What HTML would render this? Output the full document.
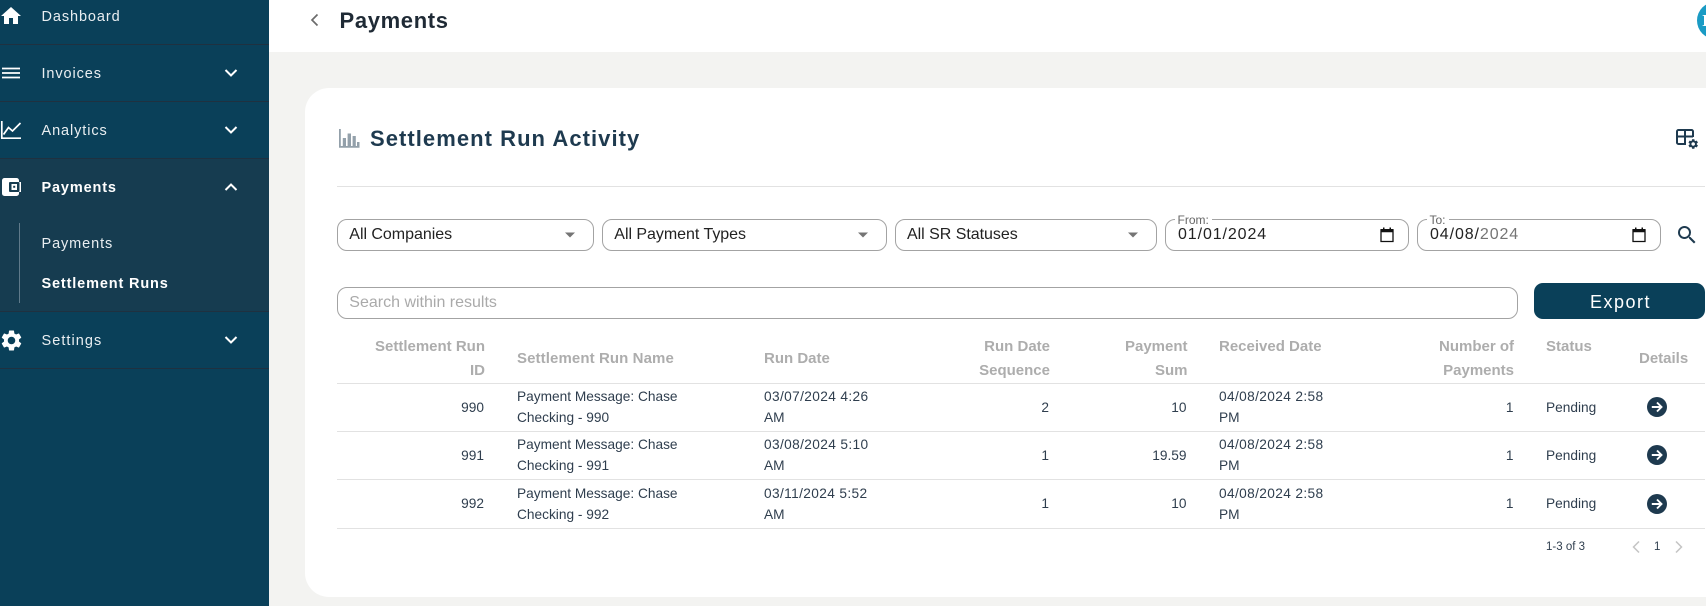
<!DOCTYPE html>
<html>
<head>
<meta charset="utf-8">
<style>
html,body{margin:0;padding:0}
body{width:1706px;height:606px;overflow:hidden;position:relative;background:#f3f3f1;font-family:"Liberation Sans",sans-serif}
.t{position:absolute;white-space:nowrap;line-height:20px}
.a{position:absolute}
.nav{color:#e9eef1;font-size:14.5px;letter-spacing:.9px;left:41.5px}
.navb{color:#fff;font-size:14.5px;font-weight:bold;letter-spacing:.85px;left:41.5px}
.div{position:absolute;left:0;width:269px;height:1px;background:#1f3140}
.box{position:absolute;box-sizing:border-box;border:1px solid #a3a3a3;border-radius:10px;background:#fff;height:32px}
.sel{color:#222;font-size:16px;letter-spacing:-.03px}
.lab{font-size:12px;color:#666;background:#fff;padding:0 3px;line-height:12px}
.date{color:#222;font-size:16px;letter-spacing:.9px}
.th{color:#adadad;font-size:15px;font-weight:bold}
.td{color:#2f3e4e;font-size:13.7px}
.dt{letter-spacing:.37px}
.line{position:absolute;left:337px;width:1368px;height:1px;background:#e2e2e2}
</style>
</head>
<body>
<!-- header -->
<div class="a" style="left:0;top:0;width:1706px;height:52px;background:#fff"></div>
<svg class="a" style="left:308px;top:11px" width="14" height="18" viewBox="0 0 14 18"><path d="M9.5 3.5 L4 9 L9.5 14.5" fill="none" stroke="#6b6b6b" stroke-width="1.7"/></svg>
<div class="t" style="left:339.5px;top:10.500px;font-size:22px;font-weight:bold;letter-spacing:.65px;color:#1f2a35">Payments</div>
<div class="a" style="left:1697px;top:2px;width:37px;height:37px;border-radius:50%;background:#1a9bc4"></div>
<div class="t" style="left:1702px;top:11px;font-size:17px;font-weight:bold;color:#fff;font-family:'Liberation Serif',serif">I</div>

<!-- sidebar -->
<div class="a" style="left:0;top:0;width:269px;height:606px;background:#0a4059"></div>
<div class="a" style="left:0;top:159px;width:269px;height:153px;background:#163c50"></div>
<div class="div" style="top:44px"></div>
<div class="div" style="top:101px"></div>
<div class="div" style="top:158px"></div>
<div class="div" style="top:311px"></div>
<div class="div" style="top:368px"></div>

<svg class="a" style="left:-1px;top:4px" width="24" height="24" viewBox="0 0 24 24"><path fill="#fff" d="M10 20v-6h4v6h5v-8h3L12 3 2 12h3v8z"/></svg>
<div class="t nav" style="top:7px">Dashboard</div>

<svg class="a" style="left:0;top:64px" width="24" height="18" viewBox="0 0 24 18"><path fill="#fff" d="M2 3.6h18v1.800H2zM2 8.100h18v1.800H2zM2 12.600h18v1.800H2z"/></svg>
<div class="t nav" style="top:64px">Invoices</div>
<svg class="a" style="left:223px;top:67px" width="16" height="12" viewBox="0 0 16 12"><path d="M2.5 3 L8 8.500 L13.500 3" fill="none" stroke="#fff" stroke-width="2"/></svg>

<svg class="a" style="left:0;top:120px" width="22" height="20" viewBox="0 0 22 20"><path d="M1.800 1V18.200H21" fill="none" stroke="#fff" stroke-width="1.700"/><path d="M3.500 14.500 L8.500 7.500 L12.500 11 L20.500 3" fill="none" stroke="#fff" stroke-width="1.700"/></svg>
<div class="t nav" style="top:121px">Analytics</div>
<svg class="a" style="left:223px;top:124px" width="16" height="12" viewBox="0 0 16 12"><path d="M2.500 3 L8 8.500 L13.500 3" fill="none" stroke="#fff" stroke-width="2"/></svg>

<svg class="a" style="left:0;top:176px" width="24" height="22" viewBox="0 0 24 22"><rect x="2" y="2" width="17" height="18" rx="2.500" fill="#fff"/><rect x="9" y="6" width="12" height="10" fill="#fff"/><rect x="9" y="6" width="10.500" height="10" rx="1" fill="#163c50"/><rect x="11.500" y="8" width="5.500" height="6" fill="#fff"/><rect x="13.200" y="9.800" width="2" height="2" fill="#163c50"/><rect x="19.500" y="6" width="1.500" height="10" fill="#fff"/></svg>
<div class="t navb" style="top:178px">Payments</div>
<svg class="a" style="left:223px;top:181px" width="16" height="12" viewBox="0 0 16 12"><path d="M2.500 9 L8 3.500 L13.500 9" fill="none" stroke="#fff" stroke-width="2"/></svg>

<div class="a" style="left:19px;top:223px;width:1px;height:80px;background:#5f7a8a"></div>
<div class="t nav" style="top:234px">Payments</div>
<div class="t navb" style="top:274px">Settlement Runs</div>

<svg class="a" style="left:-1.500px;top:327.500px" width="25" height="25" viewBox="0 0 24 24"><path fill="#fff" d="M19.140 12.940c.04-.3.06-.61.06-.94 0-.32-.02-.64-.07-.94l2.030-1.580c.18-.14.23-.41.12-.61l-1.920-3.320c-.12-.22-.37-.29-.59-.22l-2.390.96c-.5-.38-1.030-.7-1.620-.94l-.36-2.540c-.04-.24-.24-.41-.48-.41h-3.840c-.24 0-.43.17-.47.41l-.36 2.540c-.59.24-1.130.57-1.620.94l-2.390-.96c-.22-.08-.47 0-.59.22L2.740 8.870c-.12.21-.08.47.12.61l2.030 1.580c-.05.3-.09.63-.09.94s.02.64.07.94l-2.030 1.580c-.18.14-.23.41-.12.61l1.920 3.320c.12.22.37.29.59.22l2.390-.96c.5.38 1.030.7 1.620.94l.36 2.540c.05.24.24.41.48.41h3.840c.24 0 .44-.17.47-.41l.36-2.540c.59-.24 1.130-.56 1.620-.94l2.390.96c.22.08.47 0 .59-.22l1.920-3.320c.12-.22.07-.47-.12-.61l-2.010-1.580zM12 15.600c-1.980 0-3.600-1.620-3.600-3.600s1.620-3.600 3.600-3.600 3.600 1.620 3.600 3.600-1.620 3.600-3.600 3.600z"/></svg>
<div class="t nav" style="top:331px;letter-spacing:1.050px">Settings</div>
<svg class="a" style="left:223px;top:334px" width="16" height="12" viewBox="0 0 16 12"><path d="M2.500 3 L8 8.500 L13.500 3" fill="none" stroke="#fff" stroke-width="2"/></svg>

<!-- card -->
<div class="a" style="left:305px;top:88px;width:1440px;height:509px;background:#fff;border-radius:24px"></div>

<svg class="a" style="left:339px;top:129px" width="21" height="19" viewBox="0 0 21 19"><path fill="#93a0aa" d="M0 0h1.800v17h18.700v1.700H0zM3.800 9h3.200v8H3.800zM8.600 4.500h3.400V17H8.600zM13.600 7h3.200v10h-3.200zM18 13h2.500v4H18z"/></svg>
<div class="t" style="left:370px;top:129px;font-size:22px;font-weight:bold;letter-spacing:1.050px;color:#1e3a4f">Settlement Run Activity</div>
<svg class="a" style="left:1676px;top:129px" width="24" height="21" viewBox="0 0 24 21"><path fill="none" stroke="#1e3a4f" stroke-width="2" d="M1 14V2.500A1.500 1.500 0 0 1 2.500 1h13A1.500 1.500 0 0 1 17 2.500V8M1 7.500H17M9 1V15M1 13.500A1.500 1.500 0 0 0 2.500 15H10"/><g transform="translate(11.200 9) scale(.5)"><path fill="#1e3a4f" d="M19.140 12.940c.04-.3.06-.61.06-.94 0-.32-.02-.64-.07-.94l2.030-1.580c.18-.14.23-.41.12-.61l-1.920-3.320c-.12-.22-.37-.29-.59-.22l-2.390.96c-.5-.38-1.030-.7-1.620-.94l-.36-2.540c-.04-.24-.24-.41-.48-.41h-3.840c-.24 0-.43.17-.47.41l-.36 2.540c-.59.24-1.130.57-1.620.94l-2.390-.96c-.22-.08-.47 0-.59.22L2.740 8.870c-.12.21-.08.47.12.61l2.030 1.580c-.05.3-.09.63-.09.94s.02.64.07.94l-2.030 1.580c-.18.14-.23.41-.12.61l1.920 3.320c.12.22.37.29.59.22l2.390-.96c.5.38 1.030.7 1.620.94l.36 2.540c.05.24.24.41.48.41h3.840c.24 0 .44-.17.47-.41l.36-2.540c.59-.24 1.130-.56 1.620-.94l2.390.96c.22.08.47 0 .59-.22l1.920-3.320c.12-.22.07-.47-.12-.61l-2.010-1.580zM12 15.600c-1.980 0-3.600-1.620-3.600-3.600s1.620-3.600 3.600-3.600 3.600 1.620 3.600 3.600-1.620 3.600-3.600 3.600z"/></g></svg>
<div class="a" style="left:337px;top:186px;width:1368px;height:1px;background:#e2e2e2"></div>

<!-- filters -->
<div class="box" style="left:337px;top:219px;width:257px"></div>
<div class="t sel" style="left:349.300px;top:225px">All Companies</div>
<svg class="a" style="left:563px;top:232px" width="14" height="7" viewBox="0 0 14 7"><path d="M2 0.500h10L7 5.500z" fill="#757575"/></svg>

<div class="box" style="left:602px;top:219px;width:285px"></div>
<div class="t sel" style="left:614.300px;top:225px">All Payment Types</div>
<svg class="a" style="left:856px;top:232px" width="14" height="7" viewBox="0 0 14 7"><path d="M2 0.500h10L7 5.500z" fill="#757575"/></svg>

<div class="box" style="left:895px;top:219px;width:262px"></div>
<div class="t sel" style="left:907px;top:225px">All SR Statuses</div>
<svg class="a" style="left:1126px;top:232px" width="14" height="7" viewBox="0 0 14 7"><path d="M2 0.500h10L7 5.500z" fill="#757575"/></svg>

<div class="box" style="left:1165px;top:219px;width:244px"></div>
<div class="a lab" style="left:1174.500px;top:214px">From:</div>
<div class="t date" style="left:1178px;top:225px">01/01/2024</div>
<svg class="a" style="left:1379px;top:226px" width="16" height="18" viewBox="0 0 16 18"><path fill="none" stroke="#111" stroke-width="1.300" d="M2 4h12v11.500H2z"/><path fill="#111" d="M1.500 3h13v3.200h-13zM4 1.500h1.500V4H4zM10.500 1.500H12V4h-1.500z"/></svg>

<div class="box" style="left:1417px;top:219px;width:244px"></div>
<div class="a lab" style="left:1426.500px;top:214px">To:</div>
<div class="t date" style="left:1430px;top:225px">04/08/<span style="color:#757575">2024</span></div>
<svg class="a" style="left:1631px;top:226px" width="16" height="18" viewBox="0 0 16 18"><path fill="none" stroke="#111" stroke-width="1.300" d="M2 4h12v11.500H2z"/><path fill="#111" d="M1.500 3h13v3.200h-13zM4 1.500h1.500V4H4zM10.500 1.500H12V4h-1.500z"/></svg>

<svg class="a" style="left:1675px;top:223px" width="24" height="24" viewBox="0 0 24 24"><path fill="#1e3a4f" d="M15.500 14h-.79l-.28-.27A6.471 6.471 0 0 0 16 9.500 6.500 6.500 0 1 0 9.500 16c1.610 0 3.090-.59 4.230-1.570l.27.28v.79l5 4.990L20.490 19l-4.990-5zm-6 0C7.010 14 5 11.990 5 9.500S7.010 5 9.500 5 14 7.010 14 9.500 11.990 14 9.500 14z"/></svg>

<div class="box" style="left:337px;top:287px;width:1181px"></div>
<div class="t" style="left:349.300px;top:293px;font-size:16px;color:#aaa">Search within results</div>
<div class="a" style="left:1534px;top:283px;width:171px;height:36px;background:#0a4059;border-radius:9px"></div>
<div class="t" style="left:1590px;top:292px;font-size:18px;letter-spacing:1.500px;color:#fff">Export</div>

<!-- table header -->
<div class="t th" style="right:1221px;top:337px">Settlement Run</div>
<div class="t th" style="right:1221px;top:361px">ID</div>
<div class="t th" style="left:517px;top:349px;letter-spacing:.1px">Settlement Run Name</div>
<div class="t th" style="left:764px;top:349px">Run Date</div>
<div class="t th" style="right:656px;top:337px">Run Date</div>
<div class="t th" style="right:656px;top:361px">Sequence</div>
<div class="t th" style="right:518.500px;top:337px">Payment</div>
<div class="t th" style="right:518.500px;top:361px">Sum</div>
<div class="t th" style="left:1219px;top:337px">Received Date</div>
<div class="t th" style="right:192px;top:337px">Number of</div>
<div class="t th" style="right:192px;top:361px">Payments</div>
<div class="t th" style="left:1546px;top:337px">Status</div>
<div class="t th" style="left:1639px;top:349px">Details</div>

<div class="line" style="top:383px"></div>
<div class="line" style="top:431px"></div>
<div class="line" style="top:479px"></div>
<div class="line" style="top:528px"></div>

<!-- row 1 -->
<div class="t td" style="right:1222px;top:397.500px">990</div>
<div class="t td" style="left:517px;top:386.500px">Payment Message: Chase</div>
<div class="t td" style="left:517px;top:407.500px">Checking - 990</div>
<div class="t td dt" style="left:764px;top:386.500px">03/07/2024 4:26</div>
<div class="t td" style="left:764px;top:407.500px">AM</div>
<div class="t td" style="right:657px;top:397.500px">2</div>
<div class="t td" style="right:519.500px;top:397.500px">10</div>
<div class="t td dt" style="left:1219px;top:386.500px">04/08/2024 2:58</div>
<div class="t td" style="left:1219px;top:407.500px">PM</div>
<div class="t td" style="right:192.500px;top:397.500px">1</div>
<div class="t td" style="left:1546px;top:397.500px">Pending</div>
<svg class="a" style="left:1647px;top:397px" width="20" height="20" viewBox="0 0 20 20"><circle cx="10" cy="10" r="10" fill="#1e3a4f"/><path d="M4.800 10H14M10 5.500 L14.500 10 L10 14.500" fill="none" stroke="#fff" stroke-width="1.900"/></svg>

<!-- row 2 -->
<div class="t td" style="right:1222px;top:445.500px">991</div>
<div class="t td" style="left:517px;top:434.500px">Payment Message: Chase</div>
<div class="t td" style="left:517px;top:455.500px">Checking - 991</div>
<div class="t td dt" style="left:764px;top:434.500px">03/08/2024 5:10</div>
<div class="t td" style="left:764px;top:455.500px">AM</div>
<div class="t td" style="right:657px;top:445.500px">1</div>
<div class="t td" style="right:519.500px;top:445.500px">19.59</div>
<div class="t td dt" style="left:1219px;top:434.500px">04/08/2024 2:58</div>
<div class="t td" style="left:1219px;top:455.500px">PM</div>
<div class="t td" style="right:192.500px;top:445.500px">1</div>
<div class="t td" style="left:1546px;top:445.500px">Pending</div>
<svg class="a" style="left:1647px;top:445px" width="20" height="20" viewBox="0 0 20 20"><circle cx="10" cy="10" r="10" fill="#1e3a4f"/><path d="M4.800 10H14M10 5.500 L14.500 10 L10 14.500" fill="none" stroke="#fff" stroke-width="1.900"/></svg>

<!-- row 3 -->
<div class="t td" style="right:1222px;top:493.500px">992</div>
<div class="t td" style="left:517px;top:483.500px">Payment Message: Chase</div>
<div class="t td" style="left:517px;top:504.500px">Checking - 992</div>
<div class="t td dt" style="left:764px;top:483.500px">03/11/2024 5:52</div>
<div class="t td" style="left:764px;top:504.500px">AM</div>
<div class="t td" style="right:657px;top:493.500px">1</div>
<div class="t td" style="right:519.500px;top:493.500px">10</div>
<div class="t td dt" style="left:1219px;top:483.500px">04/08/2024 2:58</div>
<div class="t td" style="left:1219px;top:504.500px">PM</div>
<div class="t td" style="right:192.500px;top:493.500px">1</div>
<div class="t td" style="left:1546px;top:493.500px">Pending</div>
<svg class="a" style="left:1647px;top:494px" width="20" height="20" viewBox="0 0 20 20"><circle cx="10" cy="10" r="10" fill="#1e3a4f"/><path d="M4.800 10H14M10 5.500 L14.500 10 L10 14.500" fill="none" stroke="#fff" stroke-width="1.900"/></svg>

<!-- pagination -->
<div class="t" style="left:1546px;top:537px;font-size:11.500px;color:#2f3e4e">1-3 of 3</div>
<svg class="a" style="left:1630px;top:540px" width="12" height="14" viewBox="0 0 12 14"><path d="M9 1.500 L3.500 7 L9 12.500" fill="none" stroke="#c4c4c4" stroke-width="1.500"/></svg>
<div class="t" style="left:1654px;top:537px;font-size:11.500px;color:#2f3e4e">1</div>
<svg class="a" style="left:1673px;top:540px" width="12" height="14" viewBox="0 0 12 14"><path d="M3 1.500 L8.500 7 L3 12.500" fill="none" stroke="#c4c4c4" stroke-width="1.500"/></svg>
</body>
</html>
